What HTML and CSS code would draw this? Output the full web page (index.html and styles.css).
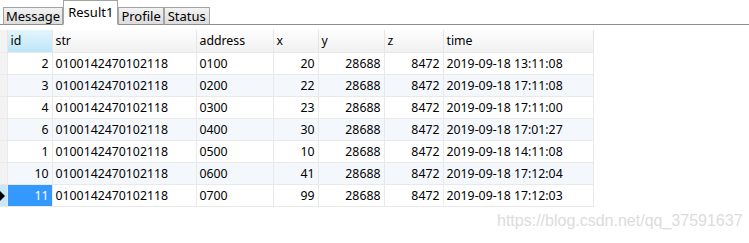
FILE: index.html
```html
<!DOCTYPE html>
<html lang="en">
<head>
    <meta charset="UTF-8">
    <title>Result1</title>
    <link rel="stylesheet" href="styles.css">
</head>
<body>
    <div class="tabs">
        <div class="tab">Message</div>
        <div class="tab active">Result1</div>
        <div class="tab">Profile</div>
        <div class="tab wide">Status</div>
    </div>

    <table class="grid">
        <colgroup>
            <col style="width: 7px">
            <col style="width: 45px">
            <col style="width: 144px">
            <col style="width: 77px">
            <col style="width: 45px">
            <col style="width: 66px">
            <col style="width: 59px">
            <col style="width: 150px">
        </colgroup>
        <thead>
            <tr>
                <th class="gutter"></th>
                <th class="sorted">id</th>
                <th>str</th>
                <th>address</th>
                <th>x</th>
                <th>y</th>
                <th>z</th>
                <th>time</th>
            </tr>
        </thead>
        <tbody>
            <tr>
                <td class="gutter"></td>
                <td class="num">2</td><td>0100142470102118</td><td>0100</td>
                <td class="num">20</td><td class="num">28688</td><td class="num">8472</td><td>2019-09-18 13:11:08</td>
            </tr>
            <tr class="alt">
                <td class="gutter"></td>
                <td class="num">3</td><td>0100142470102118</td><td>0200</td>
                <td class="num">22</td><td class="num">28688</td><td class="num">8472</td><td>2019-09-18 17:11:08</td>
            </tr>
            <tr>
                <td class="gutter"></td>
                <td class="num">4</td><td>0100142470102118</td><td>0300</td>
                <td class="num">23</td><td class="num">28688</td><td class="num">8472</td><td>2019-09-18 17:11:00</td>
            </tr>
            <tr class="alt">
                <td class="gutter"></td>
                <td class="num">6</td><td>0100142470102118</td><td>0400</td>
                <td class="num">30</td><td class="num">28688</td><td class="num">8472</td><td>2019-09-18 17:01:27</td>
            </tr>
            <tr>
                <td class="gutter"></td>
                <td class="num">1</td><td>0100142470102118</td><td>0500</td>
                <td class="num">10</td><td class="num">28688</td><td class="num">8472</td><td>2019-09-18 14:11:08</td>
            </tr>
            <tr class="alt">
                <td class="gutter"></td>
                <td class="num">10</td><td>0100142470102118</td><td>0600</td>
                <td class="num">41</td><td class="num">28688</td><td class="num">8472</td><td>2019-09-18 17:12:04</td>
            </tr>
            <tr class="current">
                <td class="gutter"><span class="marker"></span></td>
                <td class="num selected">11</td><td>0100142470102118</td><td>0700</td>
                <td class="num">99</td><td class="num">28688</td><td class="num">8472</td><td>2019-09-18 17:12:03</td>
            </tr>
        </tbody>
    </table>

    <div class="watermark">https://blog.csdn.net/qq_37591637</div>
</body>
</html>
```

FILE: styles.css
```css
body {
    margin: 0;
    background: #fff;
    font-family: "Noto Sans", "Segoe UI", sans-serif;
    font-size: 12.3px;
    color: #000;
    width: 749px;
    height: 243px;
    overflow: hidden;
    position: relative;
}

.tabs {
    display: flex;
    align-items: flex-end;
    height: 25px;
    padding-left: 3px;
    border-bottom: 1px solid #8e8e8e;
    box-sizing: border-box;
    font-family: "Noto Sans", "Segoe UI", sans-serif;
    font-size: 13px;
}

.tab {
    height: 18px;
    line-height: 16px;
    padding: 0 2px;
    margin-bottom: -1px;
    border: 1px solid #a3a3a3;
    border-bottom-color: #8e8e8e;
    background: linear-gradient(#f2f2f2, #dcdcdc);
    box-sizing: border-box;
}

.tab.wide {
    padding: 0 3px;
}

.tab.active {
    height: 25px;
    line-height: 22px;
    padding: 0 4px;
    background: #fff;
    border-color: #a3a3a3;
    border-bottom-color: #fff;
}

.grid {
    margin-top: 5px;
    border-collapse: collapse;
    table-layout: fixed;
    width: 593px;
}

.grid th,
.grid td {
    height: 22px;
    padding: 0 3px;
    box-sizing: border-box;
    border-right: 1px solid #e9e9e9;
    border-bottom: 1px solid #e9e9e9;
    white-space: nowrap;
    overflow: hidden;
    text-align: left;
}

.grid th {
    font-weight: normal;
    background: linear-gradient(#fdfdfd, #f1f1f1);
    border-right-color: #e6e6e6;
}

.grid th.sorted {
    background: linear-gradient(#e3f5fd, #bde6f8);
}

.grid .num {
    text-align: right;
}

.grid tr.alt td {
    background: #f4f8fc;
}

.grid td.gutter,
.grid th.gutter {
    padding: 0;
    background: #f3f3f3;
    position: relative;
}

.grid tr.alt td.gutter {
    background: #f3f3f3;
}

.grid tr.current td.gutter {
    background: #c5e7f7;
}

.marker {
    position: absolute;
    left: 0;
    top: 6px;
    width: 0;
    height: 0;
    border-top: 5px solid transparent;
    border-bottom: 5px solid transparent;
    border-left: 5px solid #000;
}

.grid td.selected {
    background: #3399ff;
    color: #fff;
}

.watermark {
    position: absolute;
    left: 497px;
    top: 212px;
    font-family: "Liberation Sans", Arial, sans-serif;
    font-size: 16px;
    color: #dcdcdc;
}
```
